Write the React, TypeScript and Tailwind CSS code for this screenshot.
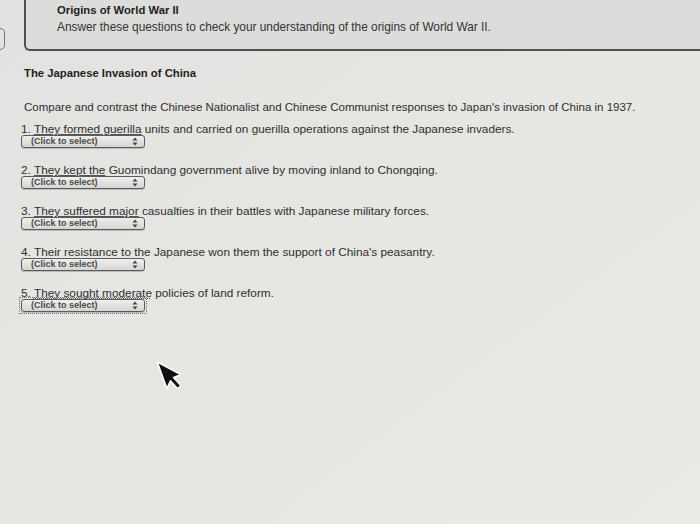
import { FC } from "react";

const questions = [
  { n: 1, under: "They formed guerilla", rest: " units and carried on guerilla operations against the Japanese invaders." },
  { n: 2, under: "They kept the", rest: " Guomindang government alive by moving inland to Chongqing." },
  { n: 3, under: "They suffered major", rest: " casualties in their battles with Japanese military forces." },
  { n: 4, under: "", rest: "Their resistance to the Japanese won them the support of China's peasantry." },
  { n: 5, under: "They sought moderate", rest: " policies of land reform." },
];

const SelectBox: FC<{ focused?: boolean }> = ({ focused }) => (
  <div className={focused ? "w-[124px] outline-1 outline-dotted outline-[#777] outline-offset-1" : "w-[124px]"}>
    <div className="flex h-[13px] items-center justify-between rounded-[3px] border border-[#5a5a5a] bg-gradient-to-b from-[#eeeeec] to-[#d6d6d4] pl-[9px] pr-[6px] shadow-[0_1px_0_#bbb]">
      <span className="text-[9px] font-bold leading-none text-[#4a4a4a]">(Click to select)</span>
      <svg width="6" height="9" viewBox="0 0 6 9">
        <path d="M3 0.5 L5.5 3.5 H0.5 Z M3 8.5 L5.5 5.5 H0.5 Z" fill="#444" />
      </svg>
    </div>
  </div>
);

export default function App() {
  return (
    <div className="relative h-[524px] w-[700px] overflow-hidden bg-gradient-to-br from-[#e2e2e0] via-[#e6e6e3] to-[#ebeae6] font-['Liberation_Sans',Arial,sans-serif] text-[#2f2f2f]">
      <div className="flex items-start">
        <div className="mt-[28px] h-[22px] w-[5px] rounded-r-[6px] border-y border-r border-[#777]" />
        <div className="ml-[19px] h-[51px] flex-1 rounded-bl-[6px] border-b-2 border-l-2 border-[#4f4f4f] bg-[#dcdcda] pl-[31px] pt-[3px]">
          <div className="text-[11.3px] font-bold leading-[14px] text-[#1f1f1f]">Origins of World War II</div>
          <div className="mt-[3px] text-[11.85px] leading-[14px] text-[#333]">
            Answer these questions to check your understanding of the origins of World War II.
          </div>
        </div>
      </div>

      <div className="pl-[24px] pt-[15px]">
        <div className="text-[11.3px] font-bold leading-[14px] text-[#1f1f1f]">The Japanese Invasion of China</div>
        <div className="mt-[20px] text-[11.5px] leading-[14px]">
          Compare and contrast the Chinese Nationalist and Chinese Communist responses to Japan's invasion of China in 1937.
        </div>
      </div>

      <div className="flex flex-col gap-[16px] pl-[21px] pt-[9px]">
        {questions.map((q) => (
          <div key={q.n} className="flex flex-col">
            <div className="text-[11.8px] leading-[12px]">
              {q.n}.{" "}
              {q.under && (
                <span
                  className={
                    q.n === 5
                      ? "underline decoration-dotted decoration-[#555] underline-offset-1"
                      : "underline decoration-[#555] underline-offset-1"
                  }
                >
                  {q.under}
                </span>
              )}
              {q.rest}
            </div>
            <SelectBox focused={q.n === 5} />
          </div>
        ))}
      </div>

      <svg className="absolute left-[150px] top-[360px]" width="30" height="40" viewBox="0 0 30 40">
        <g transform="rotate(-20 8 4)">
          <path d="M8 2 L8 30 L14 24 L18 34 L22 32 L18 22 L26 22 Z" fill="#111" stroke="#fff" strokeWidth="1.5" strokeLinejoin="round" />
        </g>
      </svg>
    </div>
  );
}
